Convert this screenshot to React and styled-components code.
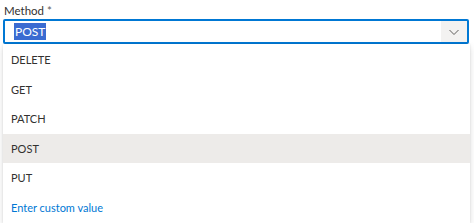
import React from "react";
import styled, { createGlobalStyle } from "styled-components";

const Global = createGlobalStyle`
  html, body { margin: 0; padding: 0; background: #ffffff; }
  body { font-family: Lato, "Noto Sans", sans-serif; }
`;

const Page = styled.div`
  width: 474px;
  height: 223px;
  overflow: hidden;
  padding: 3px 3px 0 3px;
  box-sizing: border-box;
  display: flex;
  flex-direction: column;
`;

const Label = styled.div`
  font-size: 11.5px;
  line-height: 15px;
  color: #323130;
  padding-left: 1px;
  height: 16px;
`;

const Req = styled.span`
  color: #605e5c;
  margin-left: 3px;
`;

const Field = styled.div`
  height: 25px;
  border: 2px solid #0078d4;
  border-radius: 2px;
  box-sizing: border-box;
  display: flex;
  align-items: center;
  padding-left: 9px;
  margin-right: 2px;
`;

const Value = styled.span`
  flex: 1;
  font-size: 12px;
  color: #323130;
`;

const Selected = styled.span`
  background: #3a6bd1;
  color: #ffffff;
  padding: 1px 1px;
`;

const Caret = styled.div`
  width: 26px;
  height: 100%;
  background: #f3f2f1;
  display: flex;
  align-items: center;
  justify-content: center;
  color: #605e5c;
`;

const List = styled.div`
  flex: 1;
  display: flex;
  flex-direction: column;
  background: #ffffff;
  box-shadow: 0 3px 7px rgba(0, 0, 0, 0.13), 0 0 2px rgba(0, 0, 0, 0.1);
  margin-right: 1px;
  padding-top: 1px;
`;

const Option = styled.div`
  height: 29.5px;
  display: flex;
  align-items: center;
  padding-left: 8px;
  font-size: 11px;
  color: ${(p) => (p.$link ? "#0078d4" : "#323130")};
  background: ${(p) => (p.$active ? "#edebe9" : "transparent")};
`;

const options = ["DELETE", "GET", "PATCH", "POST", "PUT"];

export default function App() {
  return (
    <>
      <Global />
      <Page>
        <Label>
          Method<Req>*</Req>
        </Label>
        <Field>
          <Value>
            <Selected>POST</Selected>
          </Value>
          <Caret>
            <svg width="12" height="12" viewBox="0 0 12 12" fill="none">
              <path d="M1.5 4 L6 8.5 L10.5 4" stroke="#605e5c" strokeWidth="1" />
            </svg>
          </Caret>
        </Field>
        <List>
          {options.map((o) => (
            <Option key={o} $active={o === "POST"}>
              {o}
            </Option>
          ))}
          <Option $link>Enter custom value</Option>
        </List>
      </Page>
    </>
  );
}
